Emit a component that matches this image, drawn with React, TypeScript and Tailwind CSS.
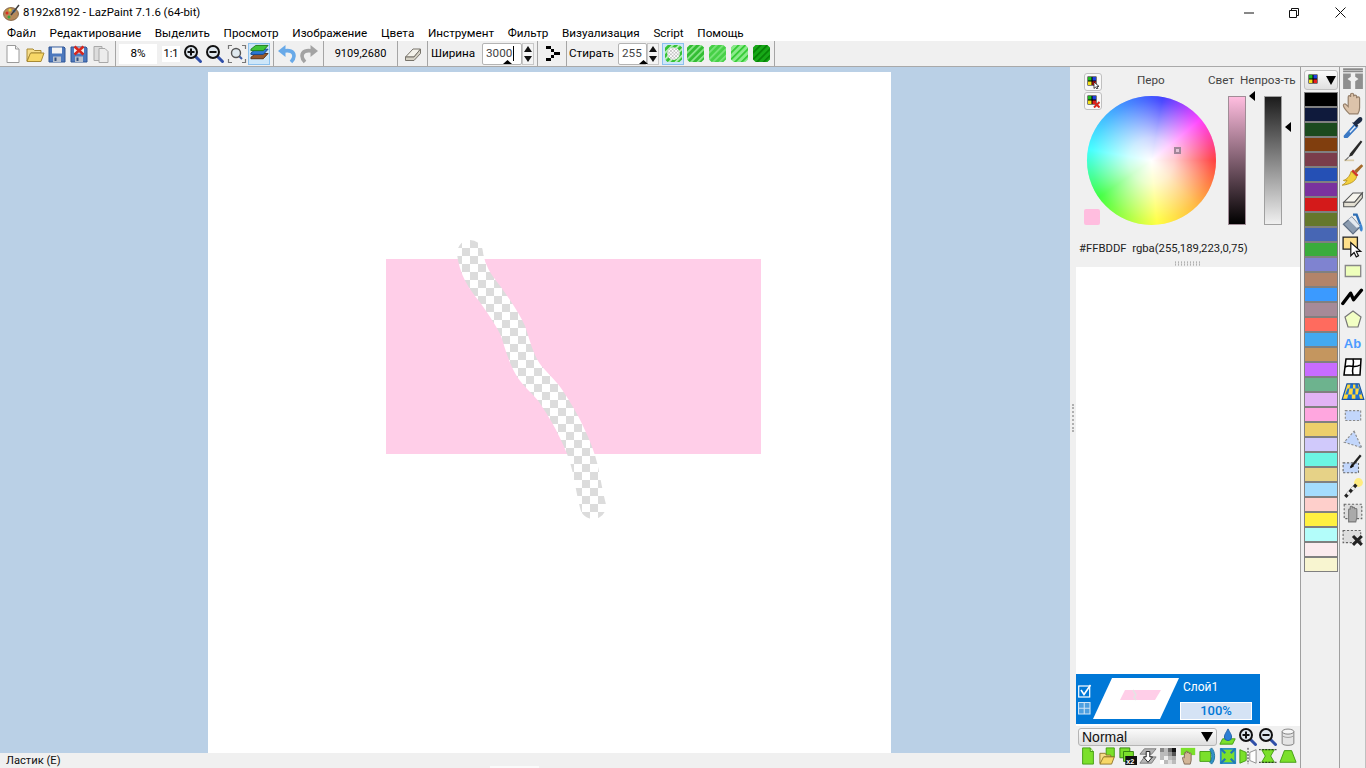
import type { ReactNode } from 'react';

const menus = ['Файл', 'Редактирование', 'Выделить', 'Просмотр', 'Изображение', 'Цвета', 'Инструмент', 'Фильтр', 'Визуализация', 'Script', 'Помощь'];

const palette = [
  '#000000', '#0f1a3c', '#1b4a1e', '#803e0e', '#7a3d4b', '#2550b5', '#7a329e', '#d41a1a',
  '#65772c', '#4766b4', '#3aac3c', '#7f83d0', '#b3846a', '#3b9aff', '#a68a98', '#ff6b5e',
  '#44a9f0', '#c4965f', '#c86cff', '#6db38e', '#e2b3f5', '#ffa6df', '#edcf6b', '#d0c9fb',
  '#6cf5e3', '#e6d287', '#a4dcfd', '#fecfcb', '#fff041', '#b3fdfa', '#fbebee', '#f8f5d0',
];

function Ico({ children, size = 20 }: { children: ReactNode; size?: number }) {
  return (
    <svg width={size} height={size} viewBox="0 0 20 20" className="shrink-0">
      {children}
    </svg>
  );
}

const Lens = ({ sign }: { sign?: 'plus' | 'minus' }) => (
  <Ico>
    <path d="M12 12l5.500 5.500" stroke="#2f4fa8" strokeWidth="3" strokeLinecap="round" />
    <circle cx="8" cy="8" r="6" fill="#dfe7ee" stroke="#111" strokeWidth="2" />
    <path d="M4.500 8h7" stroke="#111" strokeWidth="2" />
    {sign === 'plus' && <path d="M8 4.500v7" stroke="#111" strokeWidth="2" />}
  </Ico>
);

const Floppy = ({ cross }: { cross?: boolean }) => (
  <Ico>
    <path d="M2 3h15l1 1v14H2z" fill="#4c78bd" stroke="#2f5594" />
    <rect x="5" y="3.500" width="10" height="6" fill="#f3f3f3" />
    <rect x="6" y="12.500" width="8" height="5.500" fill="#b9c2cf" />
    <rect x="7.500" y="13.500" width="2" height="3.500" fill="#34507f" />
    {cross && <path d="M5.500 2.500l9 8M14.500 2.500l-9 8" stroke="#d8261c" strokeWidth="2.600" />}
  </Ico>
);

const Eraser = () => (
  <Ico>
    <path d="M2.500 13L10 5h7.500l-6.500 8z" fill="#f4f2ea" stroke="#77736a" />
    <path d="M2.500 13v3.500h8.500l6.500-7V5L11 13z" fill="#d5d1c4" stroke="#77736a" />
  </Ico>
);

const Fill = ({ kind }: { kind: 'ring' | 'a' | 'b' | 'c' | 'd' }) => {
  const id = `stripe-${kind}`;
  const back = { ring: '#34c234', a: '#33bd33', b: '#46d046', c: '#8bea8b', d: '#17a817' }[kind];
  const line = { ring: '#bdf3bd', a: '#8fe88f', b: '#7be47b', c: '#2fc92f', d: '#067e06' }[kind];
  return (
    <Ico size={17}>
      <defs>
        <pattern id={id} width="5.500" height="5.500" patternUnits="userSpaceOnUse" patternTransform="rotate(45)">
          <rect width="5.500" height="5.500" fill={back} />
          <rect width="2" height="5.500" fill={line} />
        </pattern>
        <pattern id="mini-check" width="4" height="4" patternUnits="userSpaceOnUse">
          <rect width="4" height="4" fill="#fff" />
          <rect width="2" height="2" fill="#c4c4c4" />
          <rect x="2" y="2" width="2" height="2" fill="#c4c4c4" />
        </pattern>
      </defs>
      <path d="M3 0h14l3 3v14l-3 3H3l-3-3V3z" fill={`url(#${id})`} />
      {kind === 'ring' && <circle cx="10" cy="10" r="7.500" fill="url(#mini-check)" />}
    </Ico>
  );
};

const Spin = () => (
  <div className="flex h-[22px] w-[12px] flex-col items-center justify-between border border-[#c8c8c8] bg-[#f4f4f4] py-[2px]">
    <svg width="8" height="6" viewBox="0 0 8 6"><path d="M4 0l4 6H0z" fill="#111" /></svg>
    <svg width="8" height="6" viewBox="0 0 8 6"><path d="M0 0h8L4 6z" fill="#111" /></svg>
  </div>
);

const NumberBox = ({ value, caret, width }: { value: string; caret?: boolean; width: string }) => (
  <div className={`relative flex h-[22px] items-center rounded-[2px] border border-[#b4b4b4] bg-white pl-[3px] text-[#444] ${width}`}>
    <span>{value}</span>
    {caret && <span className="ml-[1px] h-[15px] w-px bg-black" />}
    <svg width="9" height="4" viewBox="0 0 9 4" className="absolute bottom-0 left-[20px]"><path d="M4.500 0L9 4H0z" fill="#000" /></svg>
  </div>
);

const TB = ({ children, active }: { children: ReactNode; active?: boolean }) => (
  <div className={`flex h-[22px] w-[22px] shrink-0 items-center justify-center ${active ? 'border border-[#8cc1ee] bg-[#cde6f9]' : ''}`}>{children}</div>
);

const Group = ({ children, className }: { children: ReactNode; className: string }) => (
  <div className={`flex h-full shrink-0 items-center border-r border-[#a5a5a5] ${className}`}>{children}</div>
);

function Toolbar() {
  return (
    <div className="flex h-[26px] shrink-0 items-center border-b border-[#a9a9a9] bg-[#f0f0f0] text-[11.700px]">
      <Group className="w-[116px] pl-[2px]">
        <TB><Ico><path d="M4 1.500h8.500L16 5v13.500H4z" fill="#fff" stroke="#9a9a9a" /><path d="M12.500 1.500V5H16" fill="#eee" stroke="#9a9a9a" /></Ico></TB>
        <TB><Ico><path d="M2 5h6l1.500 1.500H16v2.500H6L2 17z" fill="#f6dd8a" stroke="#a88a34" /><path d="M5.500 9H19l-3 8.500H2z" fill="#f7d767" stroke="#a88a34" /></Ico></TB>
        <TB><Floppy /></TB>
        <TB><Floppy cross /></TB>
        <TB><Ico><path d="M3 2.500h8v14H3z" fill="#dcdcdc" stroke="#a8a8a8" /><path d="M8 4.500h6l3 3v11H8z" fill="#ececec" stroke="#a8a8a8" /></Ico></TB>
      </Group>
      <Group className="w-[158px] pl-[3px]">
        <div className="mr-[3px] flex h-[20px] w-[38px] items-center justify-center bg-white pt-[1px]">8%</div>
        <TB><span className="mt-[1px] bg-white px-[1px] text-[11px]">1:1</span></TB>
        <TB><Lens sign="plus" /></TB>
        <TB><Lens sign="minus" /></TB>
        <TB>
          <Ico>
            <path d="M1.500 5V1.500H5M15 1.500h3.500V5M18.500 15v3.500H15M5 18.500H1.500V15" fill="none" stroke="#777" strokeWidth="1.200" />
            <path d="M11 11l4 4" stroke="#3b5ba8" strokeWidth="2" />
            <circle cx="9" cy="9" r="4.500" fill="#dfe9ef" stroke="#555" strokeWidth="1.400" />
          </Ico>
        </TB>
        <TB active>
          <Ico size={19}>
            <path d="M1 14l5-4h13l-5 5.500H1z" fill="#96582c" stroke="#5b3214" />
            <path d="M1 9.500l5-4h13l-5 5.500H1z" fill="#2b78d4" stroke="#174a8e" />
            <path d="M1 5.500l5-4h13l-5 5.500H1z" fill="#3fc43a" stroke="#1b7c1a" />
          </Ico>
        </TB>
      </Group>
      <Group className="w-[50px] pl-[2px]">
        <TB><Ico><path d="M7 7c5-1 10 0 10 5 0 2-1 4-3 6" fill="none" stroke="#68a9e8" strokeWidth="3.600" /><path d="M8.500 1v12L1 7z" fill="#68a9e8" /></Ico></TB>
        <TB><Ico><path d="M13 7C8 6 3 7 3 12c0 2 1 4 3 6" fill="none" stroke="#a3a3a3" strokeWidth="3.600" /><path d="M11.500 1v12L19 7z" fill="#a3a3a3" /></Ico></TB>
      </Group>
      <Group className="w-[74px] justify-center pt-[1px] text-[11px]">9109,2680</Group>
      <Group className="w-[30px] justify-center"><Eraser /></Group>
      <Group className="w-[110px] pl-[3px]">
        <span className="mt-[1px] w-[51px]">Ширина</span>
        <NumberBox value="3000" caret width="w-[40px]" />
        <Spin />
      </Group>
      <Group className="w-[29px] justify-center">
        <svg width="15" height="15" viewBox="0 0 15 15"><path d="M1 0h5v3h3v3h6v3H9v3H6v3H1v-3h5V9h3V6H6V3H1z" fill="#000" /></svg>
      </Group>
      <Group className="w-[208px] pl-[2px]">
        <span className="mt-[1px] w-[49px]">Стирать</span>
        <NumberBox value="255" width="w-[29px]" />
        <Spin />
        <div className="ml-[3px] flex">
          <TB active><Fill kind="ring" /></TB>
          <TB><Fill kind="a" /></TB>
          <TB><Fill kind="b" /></TB>
          <TB><Fill kind="c" /></TB>
          <TB><Fill kind="d" /></TB>
        </div>
      </Group>
    </div>
  );
}

function Canvas() {
  return (
    <div className="relative min-h-0 flex-1 bg-[#bad0e6] pl-[208px] pt-[5px]">
      <div className="relative h-full w-[683px] overflow-hidden bg-white">
        <div className="absolute left-[178px] top-[187px] h-[195px] w-[375px] bg-[#ffcee8]" />
        <svg width="683" height="681" viewBox="208 72 683 681" className="absolute left-0 top-0">
          <defs>
            <pattern id="checker" width="16" height="16" patternUnits="userSpaceOnUse" x="206" y="72">
              <rect width="16" height="16" fill="#fff" />
              <rect width="8" height="8" fill="#dcdcdc" />
              <rect x="8" y="8" width="8" height="8" fill="#dcdcdc" />
            </pattern>
          </defs>
          <path
            d="M470 253C472 270 480 282 490 294C500 308 508 320 513 331C518 345 520 358 529 371C536 381 546 388 552 398C560 410 566 420 571 431C578 445 582 455 585 468C588 482 590 495 593 506"
            fill="none"
            stroke="url(#checker)"
            strokeWidth="26"
            strokeLinecap="round"
          />
        </svg>
      </div>
    </div>
  );
}

function ColorPanel() {
  return (
    <div className="relative h-[200px] shrink-0 bg-[#f0f0f0] text-[11.700px] text-[#444]">
      <div className="flex h-[29px] items-start pt-[5px]">
        <span className="ml-[61px] w-[71px]">Перо</span>
        <span className="w-[32px]">Свет</span>
        <span>Непроз-ть</span>
      </div>
      <div className="flex h-[129px] items-start">
        <div className="relative ml-[11px] h-[129px] w-[129px] rounded-full bg-[conic-gradient(from_90deg,#ff0000_0deg,#ffa000_45deg,#ffff00_85deg,#00ff00_145deg,#00ffff_190deg,#0000ff_280deg,#ff00ff_320deg,#ff0000_360deg)]">
          <div className="absolute inset-0 rounded-full bg-[radial-gradient(circle,#ffffff_0%,rgba(255,255,255,0.8)_25%,rgba(255,255,255,0.3)_65%,rgba(255,255,255,0)_100%)]" />
          <div className="absolute left-[87px] top-[51px] h-[7px] w-[7px] border-2 border-[#a2869a] bg-[#e3c3d6]" />
        </div>
        <div className="ml-[12px] h-[129px] w-[18px] border border-[#a08c96] bg-[linear-gradient(#ffbddf,#000000)]" />
        <svg width="6" height="10" viewBox="0 0 6 10" className="ml-[3px] mt-[-5px]"><path d="M6 0v10L0 5z" fill="#000" /></svg>
        <div className="ml-[9px] h-[129px] w-[18px] border border-[#a0a0a0] bg-[linear-gradient(#1c1c1c,#f0f0f0)]" />
        <svg width="6" height="10" viewBox="0 0 6 10" className="ml-[3px] mt-[26px]"><path d="M6 0v10L0 5z" fill="#000" /></svg>
      </div>
      <div className="ml-[3px] mt-[16px] whitespace-pre text-[11.300px] text-[#222]">#FFBDDF  rgba(255,189,223,0,75)</div>
      <div className="ml-[98px] mt-[3px] h-[5px] w-[28px] bg-[radial-gradient(circle,#a8a8a8_0.7px,transparent_1px)] bg-[length:3px_2.500px]" />
      <button className="absolute left-[8px] top-[6px] flex h-[18px] w-[18px] items-center justify-center rounded-[3px] border border-[#c0c0c0] bg-[#f8f8f8]">
        <PaletteGlyph mark="arrow" />
      </button>
      <button className="absolute left-[8px] top-[25px] flex h-[18px] w-[18px] items-center justify-center rounded-[3px] border border-[#c0c0c0] bg-[#f8f8f8]">
        <PaletteGlyph mark="cross" />
      </button>
      <div className="absolute left-[8px] top-[142px] h-[16px] w-[16px] rounded-[2px] bg-[#ffbddf]" />
    </div>
  );
}

function PaletteGlyph({ mark }: { mark?: 'arrow' | 'cross' }) {
  return (
    <svg width="13" height="13" viewBox="0 0 13 13">
      <rect x="0.500" y="0.500" width="9" height="9" fill="#000" />
      <rect x="1" y="1" width="3.500" height="3.500" fill="#1fb81f" />
      <rect x="5.500" y="1" width="3.500" height="3.500" fill="#1f3fe0" />
      <rect x="1" y="5.500" width="3.500" height="3.500" fill="#f3e019" />
      <rect x="5.500" y="5.500" width="3.500" height="3.500" fill="#e82020" />
      {mark === 'arrow' && <path d="M7 6v6.500l1.600-1.500 1.200 2 1.200-.6-1.200-2H12z" fill="#fff" stroke="#000" strokeWidth="0.700" />}
      {mark === 'cross' && <path d="M7 7l5.500 5.500M12.500 7L7 12.500" stroke="#d8261c" strokeWidth="2" />}
    </svg>
  );
}

const greenFill = '#7be02b';
const greenLine = '#3f9a10';

function LayerArea() {
  return (
    <div className="flex min-h-0 flex-1 flex-col justify-end bg-white pb-[2px]">
      <div className="flex h-[50px] w-[184px] items-center bg-[#0078d7] text-white">
        <div className="flex h-full w-[17px] shrink-0 flex-col items-start justify-center gap-[4px] pl-[2px]">
          <svg width="14" height="14" viewBox="0 0 14 14"><rect x="0.700" y="2" width="11" height="11" fill="none" stroke="#fff" strokeWidth="1.200" /><path d="M3 6l3 4.500L12.500 1" fill="none" stroke="#fff" strokeWidth="1.600" /></svg>
          <svg width="13" height="13" viewBox="0 0 13 13"><path d="M.5.5h11.500v11.500H.5zM6.250.5v11.500M.5 6.250h11.500" fill="#4d9fe0" stroke="#cfe4f6" strokeWidth="1.100" /></svg>
        </div>
        <svg width="87" height="42" viewBox="0 0 87 42" className="shrink-0">
          <path d="M19 0h67L67 41H0z" fill="#fff" />
          <path d="M32 12h36l-6 10H27z" fill="#ffcee8" />
          <path d="M40 12l3 5-2 2 2 3" fill="none" stroke="#e4e4e4" strokeWidth="1.500" />
        </svg>
        <div className="flex flex-1 flex-col gap-[7px] pr-[8px] pt-[1px] text-[12px]">
          <span className="pl-[3px] leading-[16px]">Слой1</span>
          <div className="flex h-[18px] items-center justify-center border border-white bg-[#d5e3f5] text-[13px] font-medium text-[#0078d7]">100%</div>
        </div>
      </div>
    </div>
  );
}

const SmallShape = ({ children }: { children: ReactNode }) => (
  <div className="flex h-[20px] w-[20px] shrink-0 items-center justify-center">{children}</div>
);

function LayerTools() {
  return (
    <div className="flex h-[42px] shrink-0 flex-col bg-[#f0f0f0] pl-[2px] pt-[2px]">
      <div className="flex h-[18px] items-center">
        <div className="flex h-[18px] w-[139px] items-center justify-between rounded-[3px] border border-[#b5b5b5] bg-[linear-gradient(#fbfbfb,#dedede)] px-[3px] font-['Liberation_Sans',sans-serif] text-[14px] text-[#111]">
          <span>Normal</span>
          <svg width="12" height="10" viewBox="0 0 12 10"><path d="M0 0h12L6 10z" fill="#000" /></svg>
        </div>
        <div className="ml-[1px] flex">
          <SmallShape>
            <Ico size={18}><path d="M1 18l3-6h14l-3 6z" fill={greenFill} stroke={greenLine} /><path d="M10 1c2 4 4 6 4 9a4 4 0 01-8 0c0-3 2-5 4-9z" fill="#2d7fd4" stroke="#1b5da5" /></Ico>
          </SmallShape>
          <SmallShape><Lens sign="plus" /></SmallShape>
          <SmallShape><Lens sign="minus" /></SmallShape>
          <SmallShape>
            <Ico size={18}><path d="M3.500 4v13c0 3 13 3 13 0V4z" fill="#e4e4e4" stroke="#777" /><ellipse cx="10" cy="4" rx="6.500" ry="2.800" fill="#f6f6f6" stroke="#777" /><path d="M4 9c3 2 9 2 12 0" fill="none" stroke="#999" /></Ico>
          </SmallShape>
        </div>
      </div>
      <div className="flex h-[20px] items-center">
        <SmallShape><Ico size={18}><path d="M4 1h8.500L16 5v14H4z" fill={greenFill} stroke={greenLine} /><path d="M12.500 1v4H16" fill="#cdf7a3" stroke={greenLine} /></Ico></SmallShape>
        <SmallShape><Ico size={18}><path d="M8 1h9v10H8z" fill={greenFill} stroke={greenLine} /><path d="M1 7h6l1 2h5v2H6l-3 7H1z" fill="#f6dd8a" stroke="#8d7426" /><path d="M5 11h12l-3 8H1z" fill="#f7d767" stroke="#8d7426" /></Ico></SmallShape>
        <SmallShape><Ico size={18}><path d="M1 1h11v11H1z" fill={greenFill} stroke="#2f7d0c" /><path d="M5 5h11v11H5z" fill={greenFill} stroke="#2f7d0c" /><rect x="7" y="10" width="13" height="10" fill="#111" /><text x="8" y="18.500" fontSize="8" fontWeight="700" fill="#fff" fontFamily="Liberation Sans, sans-serif">x2</text></Ico></SmallShape>
        <SmallShape><Ico size={18}><path d="M6 2h13l-5 6H1zM6 11h13l-5 7H1z" fill="#b5b5b5" stroke="#777" /><path d="M8 5h4v6h3l-5 6-5-6h3z" fill="#fff" stroke="#111" /></Ico></SmallShape>
        <SmallShape>
          <svg width="16" height="16" viewBox="0 0 4 4"><rect width="4" height="4" fill="#bbb" /><rect x="3" width="1" height="1" fill="#111" /><rect x="2" width="1" height="1" fill="#666" /><rect y="1" x="2" width="1" height="1" fill="#999" /><rect y="1" x="3" width="1" height="1" fill="#555" /><rect x="0" y="3" width="1" height="1" fill="#fff" /><rect x="1" y="2" width="1" height="1" fill="#eee" /><rect x="2" y="3" width="1" height="1" fill="#ddd" /><rect x="3" y="2" width="1" height="1" fill="#aaa" /><rect width="1" height="1" fill="#888" /></svg>
        </SmallShape>
        <SmallShape><Ico size={18}><path d="M2 1h16v8H2z" fill={greenFill} /><path d="M6 19c-1-3-2-5-2-7 0-1 1-1 2 0V7c0-1 1.500-1 1.500 0V5.500c0-1 2-1 2 0v1c0-1 2-1 2 0v1c0-1 2-1 2 0V15l-1 4z" fill="#d2b597" stroke="#7b6450" /></Ico></SmallShape>
        <SmallShape><Ico size={18}><path d="M1 5h12v11H1z" fill={greenFill} stroke={greenLine} /><path d="M14 1c4 4 5 13 0 18l-2-2c3-3 3-10 0-14z" fill="#3294c8" stroke="#1c6d99" /></Ico></SmallShape>
        <SmallShape><Ico size={18}><path d="M2 2h16v16H2z" fill={greenFill} stroke="#2d8fc7" strokeWidth="2" /><path d="M2 2l5 5M18 2l-5 5M2 18l5-5M18 18l-5-5" stroke="#2079b5" strokeWidth="2.500" /></Ico></SmallShape>
        <SmallShape><Ico size={18}><path d="M1 3l7 3v9l-7 3z" fill={greenFill} stroke={greenLine} /><path d="M19 3l-7 3v9l7 3z" fill="#fff" stroke="#888" /><path d="M10 1v18" stroke="#111" strokeDasharray="2 1.500" /></Ico></SmallShape>
        <SmallShape><Ico size={18}><path d="M3 3h14l-4 7 4 7H3l4-7z" fill={greenFill} stroke={greenLine} /><path d="M0 3h20M0 17h20" stroke="#111" strokeDasharray="2 1.500" /></Ico></SmallShape>
        <SmallShape><Ico size={18}><path d="M6 4h8l5 13H1z" fill={greenFill} stroke={greenLine} /></Ico></SmallShape>
      </div>
    </div>
  );
}

const toolIcons: ReactNode[] = [
  <Ico size={22} key="handles"><path d="M1 1h18M1 3h18" stroke="#8a8a8a" strokeWidth="1.500" /><path d="M1 5h7v3L5 10l3 2v7H1zM19 5h-7v3l3 2-3 2v7h7z" fill="#8f8f8f" /></Ico>,
  <Ico size={24} key="hand"><path d="M7 19c-2-2-5-5-5-7 0-1.500 1.500-1.500 2.500-.5L6 13V5c0-1.500 2-1.500 2 0V3c0-1.500 2.500-1.500 2.500 0v1.500c0-1.500 2.500-1.500 2.500 0V6c0-1.500 2.500-1.500 2.500 0v8c0 2-.5 3.500-1.500 5z" fill="#dcc3aa" stroke="#96806b" strokeWidth="1" /></Ico>,
  <Ico size={22} key="pipette"><path d="M2.500 18l9-10 2 2-8.500 9c-1 1.500-3.500.5-2.500-1z" fill="#e6eef8" stroke="#3a78c4" strokeWidth="1.500" /><path d="M10.500 6l4.500-4.500c1-1 3.500-1 3.500 1.500s-3.500 4-4.500 5l1 1-2 1-4-4z" fill="#1d2a44" /><path d="M2.500 18l4-4 1.500 2-3 3c-1 1.500-3.500.5-2.500-1z" fill="#3a78c4" /></Ico>,
  <Ico size={22} key="pen"><path d="M18.500 1.500l-1.500-1L7.500 12 6 15.500 9.500 14z" fill="#2a2a2a" /><path d="M2 18.500h9" stroke="#d9cba6" strokeWidth="1.500" /><path d="M6 15.500l-3 3" stroke="#666" /></Ico>,
  <Ico size={24} key="broom"><path d="M17 1l1.500 1.500-5.500 6-2-2z" fill="#a46a2b" /><path d="M10 5.500l4.500 4.500-1.500 1.500-4.500-4.500z" fill="#d0332a" /><path d="M8.500 7l4.500 4.500c-1 4-6 6.500-12 7 2.500-1.500 3.500-3 4-4-1 .5-2 .5-3 0 3-1 5-3 6.500-7.500z" fill="#f3cf3d" stroke="#b38d18" strokeWidth="0.700" /></Ico>,
  <Ico size={22} key="eraser"><path d="M1.500 13L10 4.500h8.500l-7 8.500z" fill="#f7f5ee" stroke="#555" /><path d="M1.500 13v4h10l7-8V4.500L11.500 13z" fill="#e3dfd2" stroke="#555" /></Ico>,
  <Ico size={24} key="bucket"><path d="M2 11l7-6 7 8-6 6z" fill="#8c9cb0" stroke="#5f6f84" /><path d="M9 5l7 8-3 1-7-7z" fill="#e4e9ef" /><path d="M10 3h3l3 8" fill="none" stroke="#2f6fb5" strokeWidth="2" /><path d="M16.500 10c2 3 2 7 .5 7s-2.500-4-.5-7z" fill="#3f86d2" /></Ico>,
  <Ico size={22} key="rectTool"><path d="M1 1h13v11H1z" fill="#ffe08a" stroke="#222" strokeWidth="1.200" /><path d="M8 6v12l3-3 2 4 2-1-2-4h4z" fill="#fff" stroke="#111" strokeWidth="1.100" /></Ico>,
  <Ico size={22} key="rect"><path d="M3 5h14v10H3z" fill="#eeffbb" stroke="#888" strokeWidth="1.200" /></Ico>,
  <Ico size={24} key="curve"><path d="M1.500 17L8 8.500l2.500 5.500L17 6" fill="none" stroke="#000" strokeWidth="2.800" strokeLinejoin="round" strokeLinecap="round" /></Ico>,
  <Ico size={20} key="polygon"><path d="M10 2l8 6-3 10H5L2 8z" fill="#f2ffc4" stroke="#777" strokeWidth="1.200" /></Ico>,
  <span key="text" className="font-['Liberation_Sans',sans-serif] text-[13px] font-bold leading-none text-[#4d9bff]">Ab</span>,
  <Ico size={20} key="deform"><path d="M3 2h15l-1 16H1z" fill="#fff" stroke="#000" strokeWidth="1.500" /><path d="M2 10c5-3 9 2 15-2M10 2c2 5-2 10 0 16" fill="none" stroke="#000" strokeWidth="1.500" /></Ico>,
  <Ico size={24} key="persp"><path d="M5 4h10l4 13H1z" fill="#ffd83b" /><path d="M8 4h2v4H7zM12 4h2l1 4h-3zM5.500 8H7l-1 5H3.500zM10 8h2v5H9.500zM15 8h1l1 5h-3zM6 13h3v4H5zM12 13h3l1 4h-4z" fill="#2173d4" /><path d="M5 4h10l4 13H1z" fill="none" stroke="#1554a8" /></Ico>,
  <Ico size={22} key="selRect"><path d="M3 6h14v9H3z" fill="#c2d6fb" stroke="#8a8a8a" strokeDasharray="2 1.500" /></Ico>,
  <Ico size={22} key="selPoly"><path d="M11 2l7 15L2 12z" fill="#c2d6fb" stroke="#8a8a8a" strokeDasharray="2 1.500" /></Ico>,
  <Ico size={22} key="selPen"><path d="M1 9h14v9H1z" fill="#c2d6fb" stroke="#666" strokeDasharray="2 1.500" /><path d="M17 2L8 13" stroke="#222" strokeWidth="2" /><path d="M9 10l-2 4 4-2z" fill="#111" /></Ico>,
  <Ico size={22} key="wand"><circle cx="15" cy="5" r="4" fill="#ffec80" /><path d="M3 18L13 7" stroke="#222" strokeWidth="3" /><path d="M5 16l2-2.200M9 11.500l2-2.200" stroke="#eee" strokeWidth="3" /></Ico>,
  <Ico size={22} key="selHand"><path d="M2 3h16v13H2z" fill="#ddd" stroke="#666" strokeDasharray="2 1.500" /><path d="M6 19V8c0-1 1.500-1 1.500 0V5.500c0-1 2-1 2 0v1c0-1 2-1 2 0v1c0-1 2-1 2 0V15l-1 4z" fill="#aaa" stroke="#7a7a7a" /></Ico>,
  <Ico size={22} key="selDelete"><path d="M1 5h16v11H1z" fill="#ddd" stroke="#666" strokeDasharray="2 1.500" /><path d="M10 10l8 8M18 10l-8 8" stroke="#222" strokeWidth="2.800" /></Ico>,
];

export default function App() {
  return (
    <div className="flex h-[768px] w-[1366px] flex-col overflow-hidden bg-white font-['Roboto',sans-serif] text-[11.700px] text-black">
      <div className="flex h-[25px] shrink-0 items-center bg-white">
        <svg width="18" height="17" viewBox="0 0 18 17" className="ml-[3px] mr-[2px]">
          <ellipse cx="8" cy="10" rx="7.500" ry="6.500" fill="#b6895a" stroke="#6b4a28" strokeWidth="0.700" />
          <circle cx="4" cy="9" r="1.500" fill="#d8301f" />
          <circle cx="7" cy="6" r="1.500" fill="#e9d02a" />
          <circle cx="11" cy="7" r="1.500" fill="#2f7fd4" />
          <circle cx="6" cy="13" r="1.500" fill="#36a83c" />
          <path d="M16 1L8 11" stroke="#3f3f3f" strokeWidth="1.500" />
        </svg>
        <span className="text-[11.400px]">8192x8192 - LazPaint 7.1.6 (64-bit)</span>
        <div className="ml-auto flex items-center">
          <svg width="10" height="10" viewBox="0 0 10 10" className="mr-[35px]"><path d="M0 5h10" stroke="#111" /></svg>
          <svg width="10" height="10" viewBox="0 0 10 10" className="mr-[36px]"><path d="M.5 2.500h7v7h-7zM2.500 2.500V.5h7v7H7.500" fill="none" stroke="#111" /></svg>
          <svg width="11" height="11" viewBox="0 0 11 11" className="mr-[20px]"><path d="M.5.5l10 10M10.500.5l-10 10" stroke="#111" /></svg>
        </div>
      </div>
      <div className="flex h-[16px] shrink-0 items-center gap-[13.700px] bg-white pl-[7px] pt-[1px] leading-none">
        {menus.map((m) => <span key={m}>{m}</span>)}
      </div>
      <Toolbar />
      <div className="flex min-h-0 flex-1">
        <div className="flex w-[1070px] shrink-0 flex-col">
          <Canvas />
          <div className="flex h-[15px] shrink-0 flex-col bg-[#f0f0f0] text-[11.200px] text-[#111]">
            <div className="h-[13px] pl-[6px] pt-[1px] leading-[14px]">Ластик (E)</div>
            <div className="ml-[490px] h-[2px] w-[49px] bg-[#fafafa]" />
          </div>
        </div>
        <div className="flex w-[6px] shrink-0 items-center justify-center bg-[#f0f0f0]">
          <div className="h-[28px] w-0 border-l-2 border-dotted border-[#b0b0b0]" />
        </div>
        <div className="flex w-[225px] shrink-0 flex-col border-r border-[#a0a0a0]">
          <ColorPanel />
          <LayerArea />
          <LayerTools />
        </div>
        <div className="flex w-[39px] shrink-0 flex-col items-start border-r border-[#a0a0a0] bg-[#f0f0f0] pl-[3px] pt-[3px]">
          <div className="mb-[2px] flex h-[20px] w-[34px] items-center justify-between rounded-[3px] border border-[#c0c0c0] bg-[linear-gradient(#fbfbfb,#e0e0e0)] pl-[3px] pr-[1px]">
            <PaletteGlyph />
            <svg width="10" height="9" viewBox="0 0 10 9"><path d="M0 0h10L5 9z" fill="#000" /></svg>
          </div>
          <div className="flex w-[34px] flex-col">
            {palette.map((c) => (
              <div key={c} className="h-[15px] border border-[#808080]" style={{ backgroundColor: c }} />
            ))}
          </div>
        </div>
        <div className="flex w-[26px] shrink-0 flex-col items-center border-r border-[#c0c0c0] bg-[#f0f0f0]">
          {toolIcons.map((icon, i) => (
            <div key={i} className={`flex h-[24px] w-full items-center justify-center ${i === 15 ? 'mt-[1px]' : ''}`}>{icon}</div>
          ))}
        </div>
      </div>
    </div>
  );
}
